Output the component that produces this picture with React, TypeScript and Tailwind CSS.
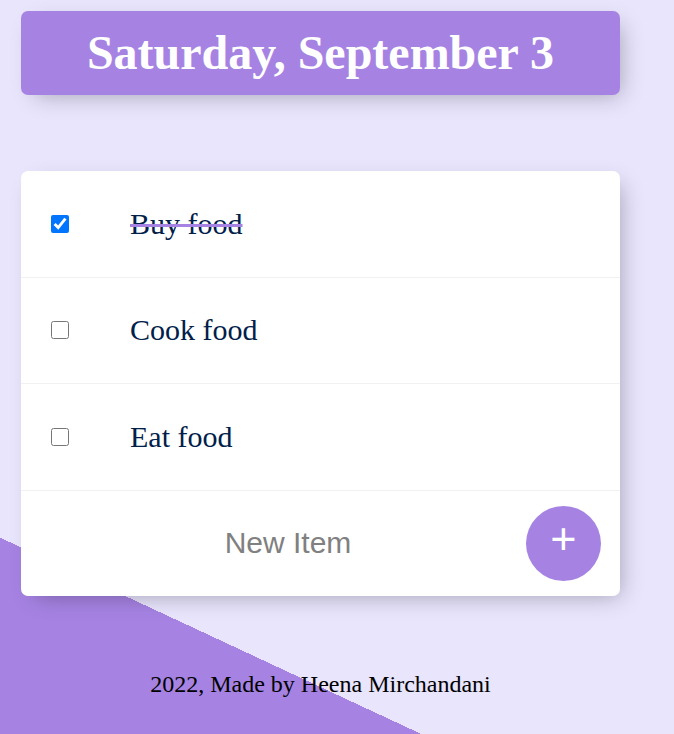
import React from "react";

const items = [
  { id: 1, label: "Buy food", done: true },
  { id: 2, label: "Cook food", done: false },
  { id: 3, label: "Eat food", done: false },
];

function TodoRow({ label, done }: { label: string; done: boolean }) {
  return (
    <div className="flex h-[106.5px] items-center border-b border-[#F1F1F1]">
      <input
        type="checkbox"
        defaultChecked={done}
        className="mx-[30px] my-0 h-[18px] w-[18px] shrink-0"
      />
      <p
        className={
          done
            ? "pl-[31px] text-[30px] leading-[34px] text-[#00204a] line-through decoration-[#A683E3] decoration-[3px]"
            : "pl-[31px] text-[30px] leading-[34px] text-[#00204a]"
        }
      >
        {label}
      </p>
    </div>
  );
}

export default function App() {
  return (
    <div
      className="min-h-screen w-full bg-[#E8E5FD] bg-[linear-gradient(25deg,#A683E3_178px,#E8E5FD_178px)] pt-[11px] pl-[21px]"
      style={{ fontFamily: '"Liberation Serif", "Times New Roman", serif' }}
    >
      <div className="w-[599px]">
        <div className="flex h-[84px] items-center justify-center rounded-[7px] bg-[#A683E3] shadow-[7px_7px_22px_-7px_rgba(0,0,0,0.3)]">
          <h1 className="text-[48px] font-bold leading-none text-white">
            Saturday, September 3
          </h1>
        </div>

        <div className="mt-[76px] overflow-hidden rounded-[7px] bg-white shadow-[7px_7px_22px_-7px_rgba(0,0,0,0.3)]">
          {items.map((item) => (
            <TodoRow key={item.id} label={item.label} done={item.done} />
          ))}
          <form
            className="ml-[30px] flex h-[105px] items-center gap-[5px]"
            onSubmit={(e) => e.preventDefault()}
          >
            <input
              type="text"
              placeholder="New Item"
              className="h-[90px] w-[474px] border-none bg-transparent text-center text-[30px] text-black outline-none placeholder:text-[#808080]"
              style={{ fontFamily: '"Liberation Sans", Arial, sans-serif' }}
            />
            <button
              type="submit"
              className="-ml-[4px] flex h-[75px] w-[75px] shrink-0 items-center justify-center rounded-full bg-[#A683E3] pb-[10px] text-[45px] leading-none text-white"
              style={{ fontFamily: '"Liberation Sans", Arial, sans-serif' }}
            >
              +
            </button>
          </form>
        </div>

        <footer className="mt-[74px] text-center text-[24px] leading-[28px] text-black">
          2022, Made by Heena Mirchandani
        </footer>
      </div>
    </div>
  );
}
